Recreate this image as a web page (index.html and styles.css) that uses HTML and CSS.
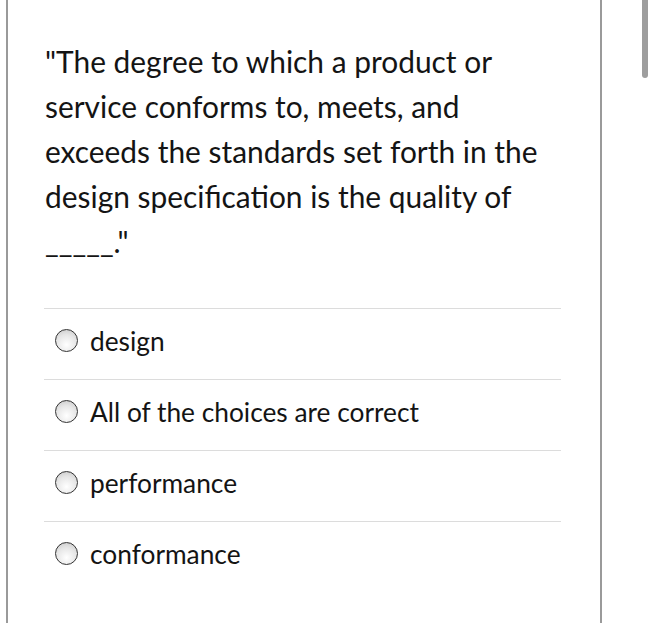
FILE: index.html
```html
<!DOCTYPE html>
<html>
<head>
<meta charset="utf-8">
<link rel="stylesheet" href="styles.css">
</head>
<body>
<div class="page">
  <div class="card">
    <p class="question">"The degree to which a product or service conforms to, meets, and exceeds the standards set forth in the design specification is the quality of _____."</p>
    <ul class="options">
      <li class="option"><span class="radio"></span><span class="label">design</span></li>
      <li class="option"><span class="radio"></span><span class="label">All of the choices are correct</span></li>
      <li class="option"><span class="radio"></span><span class="label">performance</span></li>
      <li class="option"><span class="radio"></span><span class="label">conformance</span></li>
    </ul>
  </div>
  <div class="scrollbar"></div>
</div>
</body>
</html>
```

FILE: styles.css
```css
html, body {
  margin: 0;
  padding: 0;
  background: #fff;
}
body {
  font-family: Lato, "Open Sans", sans-serif;
  color: #141414;
}
.page {
  position: relative;
  width: 652px;
  height: 623px;
  overflow: hidden;
}
.card {
  margin-left: 6px;
  width: 592px;
  height: 623px;
  border-left: 2px solid #9a9a9a;
  border-right: 2px solid #9a9a9a;
  box-sizing: content-box;
  padding: 0;
}
.question {
  margin: 0;
  padding: 39px 0 0 37px;
  width: 510px;
  font-size: 29.9px;
  line-height: 45px;
}
.options {
  list-style: none;
  margin: 44px 0 0 36px;
  padding: 0;
  width: 517px;
}
.option {
  display: flex;
  align-items: center;
  gap: 12px;
  height: 71px;
  border-top: 1.5px solid #dcdcdc;
  padding: 0 0 7px 11px;
  box-sizing: border-box;
  font-size: 26.3px;
}
.radio {
  width: 21px;
  height: 21px;
  border: 1.5px solid #333;
  border-radius: 50%;
  background: radial-gradient(circle at 50% 70%, #ffffff 0%, #e6e6e6 55%, #c4c4c4 100%);
  flex: none;
}
.label {
  line-height: 30px;
}
.scrollbar {
  position: absolute;
  right: 4px;
  top: 0;
  width: 6px;
  height: 78px;
  background: #9e9e9e;
  border-radius: 0 0 3px 3px;
}
```
